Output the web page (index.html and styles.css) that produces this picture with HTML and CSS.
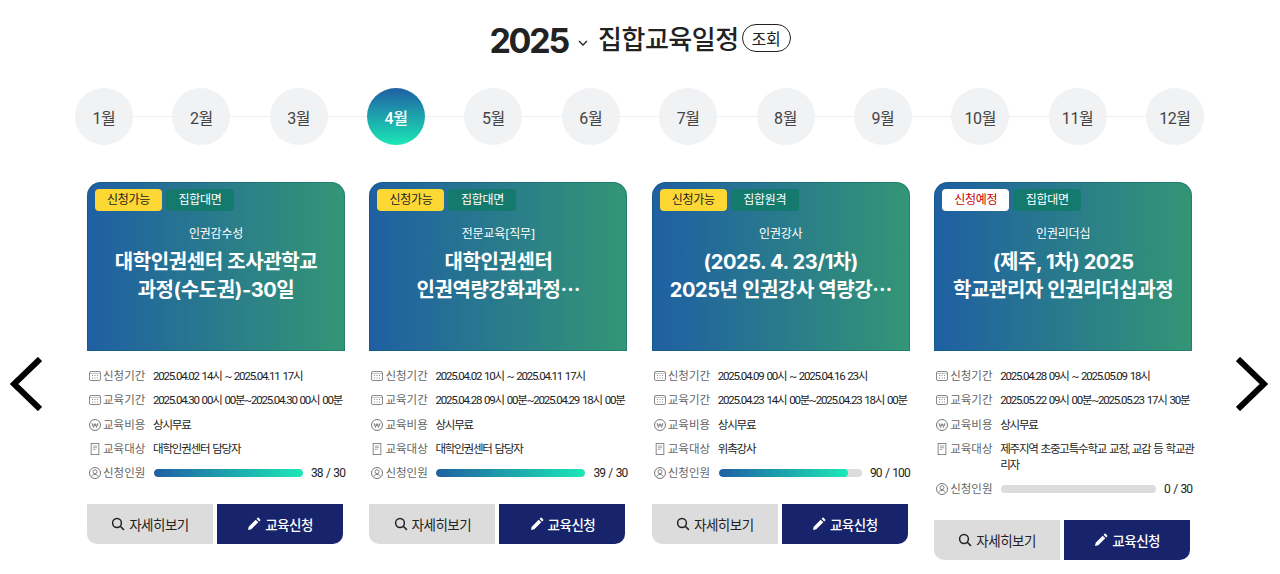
FILE: index.html
```html
<!DOCTYPE html>
<html lang="ko">
<head>
<meta charset="utf-8">
<title>집합교육일정</title>
<link rel="stylesheet" href="styles.css">
</head>
<body>
<svg class="defs" width="0" height="0" aria-hidden="true">
  <symbol id="i-cal" viewBox="0 0 12 12"><rect x="0.5" y="1.5" width="11" height="9" rx="1.5" fill="none" stroke="#8a8a8a"/><path d="M1 3.5h10" stroke="#aaa" stroke-width=".7"/><path d="M3 5.5h1M5.5 5.5h1M8 5.5h1M3 8h1M5.5 8h1M8 8h1" stroke="#8a8a8a"/></symbol>
  <symbol id="i-won" viewBox="0 0 12 12"><circle cx="6" cy="6" r="5.5" fill="none" stroke="#777"/><path d="M3 4l1.5 4.5L6 4.5l1.5 4L9 4M2.8 6h6.4" fill="none" stroke="#777" stroke-width=".8"/></symbol>
  <symbol id="i-doc" viewBox="0 0 12 14"><rect x="1.5" y="0.5" width="9" height="13" fill="none" stroke="#777"/><path d="M3.5 3.5h5M3.5 5.5h5M3.5 7.5h3" stroke="#999"/></symbol>
  <symbol id="i-user" viewBox="0 0 12 12"><circle cx="6" cy="6" r="5.5" fill="none" stroke="#777"/><circle cx="6" cy="4.7" r="2" fill="none" stroke="#777" stroke-width=".9"/><path d="M2.6 9.7c.7-1.7 2-2.3 3.4-2.3s2.7.6 3.4 2.3" fill="none" stroke="#777" stroke-width=".9"/></symbol>
  <symbol id="i-search" viewBox="0 0 14 14"><circle cx="6" cy="6" r="4.4" fill="none" stroke="#222" stroke-width="1.5"/><path d="M9.3 9.3l3.6 3.6" stroke="#222" stroke-width="1.5"/></symbol>
  <symbol id="i-pen" viewBox="0 0 14 14"><path d="M1 13l.7-3.3 7-7 2.6 2.6-7 7zM9.6 1.8l1-1c.3-.3.7-.3 1 0l1.6 1.6c.3.3.3.7 0 1l-1 1z" fill="#fff"/></symbol>
</svg>

<main class="page">
  <header class="head">
    <span class="year">2025</span>
    <svg class="caret" viewBox="0 0 10 6" aria-hidden="true"><path d="M1 1l4 4 4-4" fill="none" stroke="#222" stroke-width="1.3"/></svg>
    <h1 class="head-title">집합교육일정</h1>
    <button class="lookup">조회</button>
  </header>

  <nav class="months">
    <a class="month">1월</a><a class="month">2월</a><a class="month">3월</a><a class="month month-on">4월</a><a class="month">5월</a><a class="month">6월</a><a class="month">7월</a><a class="month">8월</a><a class="month">9월</a><a class="month">10월</a><a class="month">11월</a><a class="month">12월</a>
  </nav>

  <section class="cards">
    <article class="card">
      <div class="banner">
        <div class="tags"><span class="tag tag-open">신청가능</span><span class="tag tag-kind">집합대면</span></div>
        <p class="cat">인권감수성</p>
        <h2 class="title">대학인권센터 조사관학교<br>과정(수도권)-30일</h2>
      </div>
      <dl class="info">
        <div class="row"><dt><svg class="ic"><use href="#i-cal"/></svg>신청기간</dt><dd>2025.04.02 14시 ~ 2025.04.11 17시</dd></div>
        <div class="row"><dt><svg class="ic"><use href="#i-cal"/></svg>교육기간</dt><dd>2025.04.30 00시 00분~2025.04.30 00시 00분</dd></div>
        <div class="row"><dt><svg class="ic"><use href="#i-won"/></svg>교육비용</dt><dd>상시무료</dd></div>
        <div class="row"><dt><svg class="ic"><use href="#i-doc"/></svg>교육대상</dt><dd>대학인권센터 담당자</dd></div>
        <div class="row"><dt><svg class="ic"><use href="#i-user"/></svg>신청인원</dt><dd class="people"><span class="bar"><span class="fill" style="width:100%"></span></span><span class="count">38 / 30</span></dd></div>
      </dl>
      <div class="btns"><a class="btn btn-view"><svg class="bi"><use href="#i-search"/></svg>자세히보기</a><a class="btn btn-apply"><svg class="bi"><use href="#i-pen"/></svg>교육신청</a></div>
    </article>

    <article class="card">
      <div class="banner">
        <div class="tags"><span class="tag tag-open">신청가능</span><span class="tag tag-kind">집합대면</span></div>
        <p class="cat">전문교육[직무]</p>
        <h2 class="title">대학인권센터<br>인권역량강화과정⋯</h2>
      </div>
      <dl class="info">
        <div class="row"><dt><svg class="ic"><use href="#i-cal"/></svg>신청기간</dt><dd>2025.04.02 10시 ~ 2025.04.11 17시</dd></div>
        <div class="row"><dt><svg class="ic"><use href="#i-cal"/></svg>교육기간</dt><dd>2025.04.28 09시 00분~2025.04.29 18시 00분</dd></div>
        <div class="row"><dt><svg class="ic"><use href="#i-won"/></svg>교육비용</dt><dd>상시무료</dd></div>
        <div class="row"><dt><svg class="ic"><use href="#i-doc"/></svg>교육대상</dt><dd>대학인권센터 담당자</dd></div>
        <div class="row"><dt><svg class="ic"><use href="#i-user"/></svg>신청인원</dt><dd class="people"><span class="bar"><span class="fill" style="width:100%"></span></span><span class="count">39 / 30</span></dd></div>
      </dl>
      <div class="btns"><a class="btn btn-view"><svg class="bi"><use href="#i-search"/></svg>자세히보기</a><a class="btn btn-apply"><svg class="bi"><use href="#i-pen"/></svg>교육신청</a></div>
    </article>

    <article class="card">
      <div class="banner">
        <div class="tags"><span class="tag tag-open">신청가능</span><span class="tag tag-kind">집합원격</span></div>
        <p class="cat">인권강사</p>
        <h2 class="title">(2025. 4. 23/1차)<br>2025년 인권강사 역량강⋯</h2>
      </div>
      <dl class="info">
        <div class="row"><dt><svg class="ic"><use href="#i-cal"/></svg>신청기간</dt><dd>2025.04.09 00시 ~ 2025.04.16 23시</dd></div>
        <div class="row"><dt><svg class="ic"><use href="#i-cal"/></svg>교육기간</dt><dd>2025.04.23 14시 00분~2025.04.23 18시 00분</dd></div>
        <div class="row"><dt><svg class="ic"><use href="#i-won"/></svg>교육비용</dt><dd>상시무료</dd></div>
        <div class="row"><dt><svg class="ic"><use href="#i-doc"/></svg>교육대상</dt><dd>위촉강사</dd></div>
        <div class="row"><dt><svg class="ic"><use href="#i-user"/></svg>신청인원</dt><dd class="people"><span class="bar"><span class="fill" style="width:90%"></span></span><span class="count">90 / 100</span></dd></div>
      </dl>
      <div class="btns"><a class="btn btn-view"><svg class="bi"><use href="#i-search"/></svg>자세히보기</a><a class="btn btn-apply"><svg class="bi"><use href="#i-pen"/></svg>교육신청</a></div>
    </article>

    <article class="card">
      <div class="banner">
        <div class="tags"><span class="tag tag-soon">신청예정</span><span class="tag tag-kind">집합대면</span></div>
        <p class="cat">인권리더십</p>
        <h2 class="title">(제주, 1차) 2025<br>학교관리자 인권리더십과정</h2>
      </div>
      <dl class="info">
        <div class="row"><dt><svg class="ic"><use href="#i-cal"/></svg>신청기간</dt><dd>2025.04.28 09시 ~ 2025.05.09 18시</dd></div>
        <div class="row"><dt><svg class="ic"><use href="#i-cal"/></svg>교육기간</dt><dd>2025.05.22 09시 00분~2025.05.23 17시 30분</dd></div>
        <div class="row"><dt><svg class="ic"><use href="#i-won"/></svg>교육비용</dt><dd>상시무료</dd></div>
        <div class="row"><dt><svg class="ic"><use href="#i-doc"/></svg>교육대상</dt><dd>제주지역 초중고특수학교 교장, 교감 등 학교관리자</dd></div>
        <div class="row"><dt><svg class="ic"><use href="#i-user"/></svg>신청인원</dt><dd class="people"><span class="bar"></span><span class="count">0 / 30</span></dd></div>
      </dl>
      <div class="btns"><a class="btn btn-view"><svg class="bi"><use href="#i-search"/></svg>자세히보기</a><a class="btn btn-apply"><svg class="bi"><use href="#i-pen"/></svg>교육신청</a></div>
    </article>

    <button class="arrow arrow-prev" aria-label="이전"><svg viewBox="0 0 32 54"><path d="M30 2L4 27l26 25" fill="none" stroke="#000" stroke-width="6"/></svg></button>
    <button class="arrow arrow-next" aria-label="다음"><svg viewBox="0 0 32 54"><path d="M2 2l26 25L2 52" fill="none" stroke="#000" stroke-width="6"/></svg></button>
  </section>
</main>
</body>
</html>
```
FILE: styles.css
```css
* { box-sizing: border-box; margin: 0; padding: 0; }
html, body { height: 574px; overflow: hidden; background: #fff; }
body { font-family: Inter, "Noto Sans CJK KR", sans-serif; color: #222; }
.defs { position: absolute; }
.page { width: 1280px; padding-top: 19px; }

.head { display: flex; align-items: center; justify-content: center; height: 40px; }
.year { font-size: 34px; font-weight: 700; letter-spacing: -2.2px; color: #222; margin-top: 2px; }
.caret { width: 10px; height: 6px; margin: 8px 10px 0 10px; }
.head-title { font-size: 26px; font-weight: 500; letter-spacing: -0.5px; color: #222; margin-top: -3px; }
.lookup { width: 49px; height: 28px; margin: -3px 0 0 3px; border: 1px solid #222; border-radius: 14px; background: #fff; font: 400 16px "Noto Sans CJK KR", sans-serif; color: #222; }

.months { display: flex; justify-content: space-between; margin: 29px 76px 0 75px; position: relative; }
.months::before { content: ""; position: absolute; left: 20px; right: 20px; top: 28px; height: 1px; background: #eceef0; }
.month { position: relative; width: 58px; height: 57px; border-radius: 50%; background: #f1f2f4; display: flex; align-items: center; justify-content: center; font-family: Roboto, "Noto Sans CJK KR", sans-serif; font-size: 16px; letter-spacing: -0.4px; color: #444; }
.month-on { background: linear-gradient(180deg, #1f5fa3, #1be8b6); color: #fff; font-weight: 500; }

.cards { display: flex; gap: 24.4px; margin: 37px 88px 0 87px; align-items: flex-start; }
.card { width: 258px; flex: none; }
.banner { height: 169px; border-radius: 14px 14px 0 0; background: linear-gradient(90deg, #1f5fa3, #339675); box-shadow: inset 0 0 0 1px rgba(0, 80, 90, .3); padding: 7px 8px 0; color: #fff; text-align: center; }
.tags { display: flex; gap: 4px; }
.tag { width: 67px; height: 22px; border-radius: 4px; font-size: 12px; letter-spacing: -0.3px; line-height: 22px; text-align: center; }
.tag-open { background: #fdd835; color: #222; }
.tag-soon { background: #fff; color: #c00; }
.tag-kind { background: #157a6e; color: #fff; width: 68px; }
.cat { font-size: 12px; line-height: 16px; letter-spacing: -0.2px; margin-top: 15px; }
.title { font-size: 20px; font-weight: 700; line-height: 28px; letter-spacing: -0.4px; margin-top: 6px; }

.info { margin-top: 17px; display: flex; flex-direction: column; gap: 8.3px; }
.row { display: grid; grid-template-columns: 66px 1fr; font-size: 11.5px; line-height: 16px; letter-spacing: -1.2px; }
.row dt { display: flex; align-items: center; padding-left: 2px; color: #666; letter-spacing: 0; height: 16px; white-space: nowrap; }
.row dd { color: #222; font-family: Roboto, "Noto Sans CJK KR", sans-serif; word-spacing: 1.2px; margin-right: -4px; }
.ic { width: 12px; height: 12px; margin-right: 2px; flex: none; }
.row .people { display: flex; align-items: center; height: 16px; margin-right: 0; }
.bar { flex: 1; height: 8px; margin-left: 1px; border-radius: 4px; background: #dcdcdc; overflow: hidden; }
.fill { display: block; height: 100%; border-radius: 4px; background: linear-gradient(90deg, #1f5fa3, #1be8b6); }
.count { margin-left: 8px; font-size: 12px; letter-spacing: -0.9px; }

.btns { display: flex; gap: 4px; margin-top: 23px; width: 256px; }
.btn { width: 126px; height: 40px; display: flex; align-items: center; justify-content: center; gap: 4px; font-size: 13.5px; letter-spacing: -0.5px; }
.btn-view { background: #dcdcdc; color: #222; border-radius: 0 0 0 10px; }
.btn-apply { background: #17246b; color: #fff; font-weight: 500; border-radius: 0 0 10px 0; }
.bi { width: 14px; height: 14px; flex: none; }

.arrow { position: absolute; top: 357px; width: 32px; height: 54px; border: 0; background: none; }
.arrow svg { display: block; width: 32px; height: 54px; }
.arrow-prev { left: 10px; }
.arrow-next { right: 12px; }
```
